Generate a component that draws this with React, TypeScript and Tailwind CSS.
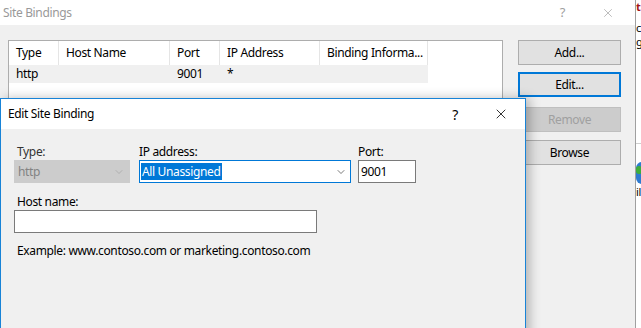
import { ChevronDown, X } from "lucide-react";

const font = {
  fontFamily: '"Segoe UI", "Noto Sans", sans-serif',
  letterSpacing: "-0.35px",
};

function WinButton({
  label,
  variant = "normal",
}: {
  label: string;
  variant?: "normal" | "focused" | "disabled";
}) {
  const cls =
    variant === "focused"
      ? "border-2 border-[#0078d7] bg-[#e1e1e1] text-black"
      : variant === "disabled"
      ? "border border-[#bfbfbf] bg-[#cccccc] text-[#a0a0a0]"
      : "border border-[#adadad] bg-[#e1e1e1] text-black";
  return (
    <div
      className={`flex h-[25px] w-[103px] items-center justify-center text-[12px] ${cls}`}
    >
      {label}
    </div>
  );
}

function SiteBindings() {
  const cols = [
    { name: "Type", w: "w-[50px]" },
    { name: "Host Name", w: "w-[111px]" },
    { name: "Port", w: "w-[50px]" },
    { name: "IP Address", w: "w-[100px]" },
    { name: "Binding Informa...", w: "w-[108px]" },
  ];
  return (
    <div className="flex h-full w-[636px] flex-col border-r border-[#a0a0a0]">
      {/* Title bar */}
      <div className="flex h-[25px] items-center bg-white pl-[3px] pr-[20px] text-[12px] text-[#999999]">
        <span className="flex-1">Site Bindings</span>
        <span className="mr-[36px] text-[13px] text-[#a0a0a0]">?</span>
        <X className="h-[14px] w-[14px] text-[#a0a0a0]" strokeWidth={1.2} />
      </div>
      {/* Body */}
      <div className="flex flex-1 gap-[15px] bg-[#f0f0f0] pl-[8px] pt-[15px]">
        <div className="h-[120px] w-[495px] border border-[#adadad] bg-white">
          <div className="flex h-[24px]">
            {cols.map((c) => (
              <div
                key={c.name}
                className={`flex items-center overflow-hidden whitespace-nowrap border-r border-[#e5e5e5] pl-[7px] text-[12px] text-black ${c.w}`}
              >
                {c.name}
              </div>
            ))}
          </div>
          <div className="flex h-[18px] w-[419px] items-center bg-[#f0f0f0] text-[12px] text-black">
            <span className="w-[50px] pl-[7px]">http</span>
            <span className="w-[111px]" />
            <span className="w-[50px] pl-[7px]">9001</span>
            <span className="w-[100px] pl-[7px]">*</span>
          </div>
        </div>
        <div className="flex flex-col">
          <WinButton label="Add..." />
          <div className="h-[7px]" />
          <WinButton label="Edit..." variant="focused" />
          <div className="h-[10px]" />
          <WinButton label="Remove" variant="disabled" />
          <div className="h-[8px]" />
          <WinButton label="Browse" />
        </div>
      </div>
    </div>
  );
}

// Sliver of another window peeking out on the right
function OtherWindow() {
  return (
    <div className="relative h-full flex-1 overflow-hidden bg-white text-[11px] leading-[12px]">
      <div className="absolute left-0 top-[1px] font-bold text-[#a31515]">t</div>
      <div className="absolute left-0 top-[22px] text-black">c</div>
      <div className="absolute left-0 top-[36px] text-black underline">g</div>
      <div className="absolute left-0 top-[143px] h-px w-full bg-[#cfcfcf]" />
      <div className="absolute left-0 top-[162px] h-[22px] w-[12px] rounded-full bg-[#2f7bd0]" />
      <div className="absolute left-0 top-[166px] h-[8px] w-[6px] rounded-full bg-[#3fae3a]" />
      <div className="absolute left-0 top-[186px] text-black">il</div>
    </div>
  );
}

function EditSiteBinding() {
  return (
    <div className="absolute left-0 top-[98px] flex h-[240px] w-[526px] flex-col border border-[#1883d7] bg-[#f0f0f0] shadow-[4px_0_10px_rgba(0,0,0,0.25)]">
      {/* Title bar */}
      <div className="flex h-[30px] items-center bg-white pl-[7px] pr-[16px] text-[12px] text-black">
        <span className="flex-1">Edit Site Binding</span>
        <span className="mr-[35px] text-[14px]">?</span>
        <X className="h-[16px] w-[16px]" strokeWidth={1.2} />
      </div>
      {/* Body */}
      <div className="flex flex-col pl-[13px] pt-[15px] text-[12px] text-black">
        <div className="flex">
          <div className="flex w-[116px] flex-col">
            <span className="h-[16px] pl-[3px] leading-[16px] text-[#333]">Type:</span>
            <div className="flex h-[23px] items-center justify-between border border-[#cccccc] bg-[#cccccc] pl-[3px] pr-[4px] text-[#838383]">
              <span>http</span>
              <ChevronDown className="h-[12px] w-[12px] text-[#a0a0a0]" strokeWidth={1.3} />
            </div>
          </div>
          <div className="ml-[9px] flex w-[212px] flex-col">
            <span className="h-[16px] leading-[16px]">IP address:</span>
            <div className="flex h-[23px] items-center justify-between border border-[#0078d7] bg-white pl-[1px] pr-[3px]">
              <span className="bg-[#0078d7] px-[1px] leading-[17px] text-white">All Unassigned</span>
              <ChevronDown className="h-[12px] w-[12px] text-[#333]" strokeWidth={1.3} />
            </div>
          </div>
          <div className="ml-[7px] flex w-[58px] flex-col">
            <span className="h-[16px] leading-[16px]">Port:</span>
            <div className="flex h-[23px] items-center border border-[#7a7a7a] bg-white pl-[2px]">
              9001
            </div>
          </div>
        </div>
        <span className="mt-[11px] h-[16px] pl-[3px] leading-[16px]">Host name:</span>
        <div className="h-[23px] w-[303px] border border-[#7a7a7a] bg-white" />
        <span className="mt-[9px] pl-[3px]">Example: www.contoso.com or marketing.contoso.com</span>
      </div>
    </div>
  );
}

export default function App() {
  return (
    <div
      className="relative h-[328px] w-[641px] overflow-hidden bg-white"
      style={font}
    >
      <div className="flex h-full">
        <SiteBindings />
        <OtherWindow />
      </div>
      <EditSiteBinding />
    </div>
  );
}
